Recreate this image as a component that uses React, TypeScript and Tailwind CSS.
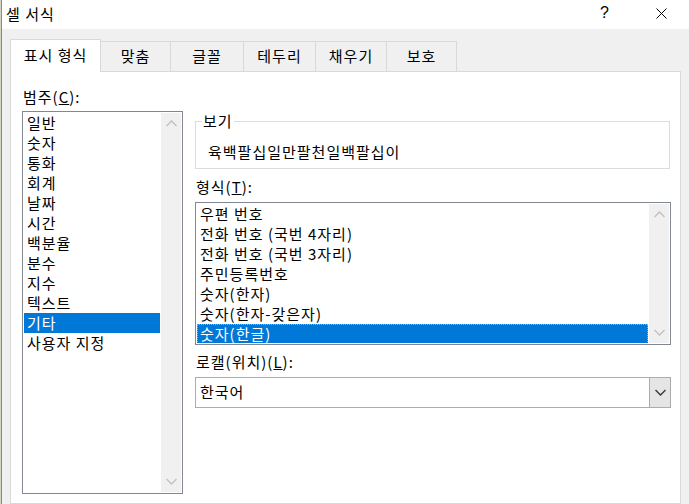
const categories = [
  "일반",
  "숫자",
  "통화",
  "회계",
  "날짜",
  "시간",
  "백분율",
  "분수",
  "지수",
  "텍스트",
  "기타",
  "사용자 지정",
]

const formats = [
  "우편 번호",
  "전화 번호 (국번 4자리)",
  "전화 번호 (국번 3자리)",
  "주민등록번호",
  "숫자(한자)",
  "숫자(한자-갖은자)",
  "숫자(한글)",
]

const tabs = [
  { label: "맞춤", w: "w-[70px]" },
  { label: "글꼴", w: "w-[73px]" },
  { label: "테두리", w: "w-[72px]" },
  { label: "채우기", w: "w-[71px]" },
  { label: "보호", w: "w-[70px]" },
]

function Chevron({ up, color = "#c2c2c2" }: { up?: boolean; color?: string }) {
  return (
    <svg width="11" height="7" viewBox="0 0 11 7">
      <polyline
        points={up ? "0.5,6 5.5,1 10.5,6" : "0.5,1 5.5,6 10.5,1"}
        fill="none"
        stroke={color}
        strokeWidth="1.5"
      />
    </svg>
  )
}

function ScrollBar() {
  return (
    <div className="flex w-[20px] flex-col justify-between bg-[#f0f0f0]">
      <div className="flex h-[21px] items-center justify-center">
        <Chevron up />
      </div>
      <div className="flex h-[21px] items-center justify-center">
        <Chevron />
      </div>
    </div>
  )
}

function ListBox({
  items,
  selected,
  focus,
  className,
}: {
  items: string[]
  selected: number
  focus?: boolean
  className: string
}) {
  return (
    <div className={`flex border border-[#828790] bg-white p-[1px] ${className}`}>
      <div className="flex-1 overflow-hidden pr-[1px]">
        {items.map((item, i) =>
          i === selected ? (
            <div
              key={item}
              className={`h-[20px] bg-[#0078d7] pl-[3px] leading-[20px] whitespace-nowrap text-white ${
                focus ? "outline-1 outline-dotted outline-[#f0a030] -outline-offset-1" : ""
              }`}
            >
              {item}
            </div>
          ) : (
            <div key={item} className="h-[20px] pl-[3px] leading-[20px] whitespace-nowrap">
              {item}
            </div>
          )
        )}
      </div>
      <ScrollBar />
    </div>
  )
}

export default function App() {
  return (
    <div className="flex h-[504px] w-[689px] overflow-hidden bg-white font-['Noto_Sans_CJK_KR','Noto_Sans',sans-serif] text-[15px] tracking-[1px] text-black">
      <div className="w-[1px] bg-[#d4d4c0]" />
      <div className="w-[1px] bg-[#8a8a8a]" />

      <div className="flex flex-1 flex-col">
        {/* title bar */}
        <div className="flex h-[29px] items-center bg-white pb-[3px] pl-[4px]">
          <span className="leading-none">셀 서식</span>
          <span className="ml-auto mr-[46px] font-['Liberation_Sans',sans-serif] text-[16px] leading-none">?</span>
          <svg width="11" height="11" viewBox="0 0 11 11" className="mr-[22px]">
            <path d="M0.5 0.5 L10.5 10.5 M10.5 0.5 L0.5 10.5" stroke="#000" strokeWidth="1" />
          </svg>
        </div>

        {/* body */}
        <div className="flex flex-1 flex-col bg-[#f0f0f0] pl-[8px] pt-[10px]">
          <div className="flex h-[32px] items-end">
            <div className="relative z-10 -mb-[1px] flex h-[33px] w-[91px] items-center justify-center border border-b-0 border-[#d9d9d9] bg-white pb-[1px]">
              표시 형식
            </div>
            {tabs.map((t) => (
              <div
                key={t.label}
                className={`flex h-[30px] ${t.w} items-center justify-center border-t border-r border-[#d9d9d9] bg-[#f0f0f0]`}
              >
                {t.label}
              </div>
            ))}
          </div>

          {/* tab page */}
          <div className="flex w-[671px] flex-1 gap-[12px] border border-[#d9d9d9] bg-white pl-[11px] pt-[15px]">
            {/* category column */}
            <div className="flex w-[161px] flex-col">
              <div className="h-[20px] pl-[1px] leading-[20px]">
                범주(<span className="underline">C</span>):
              </div>
              <ListBox items={categories} selected={10} className="mt-[4px] h-[383px]" />
            </div>

            {/* right column */}
            <div className="flex w-[476px] flex-col">
              <fieldset className="mt-[24px] mr-[1px] border border-[#dcdcdc]">
                <legend className="ml-[6px] px-[1px] leading-[20px]">보기</legend>
                <div className="pb-[6px] pl-[12px] pt-[11px] leading-[20px]">육백팔십일만팔천일백팔십이</div>
              </fieldset>

              <div className="mt-[8px] h-[20px] pl-[1px] leading-[20px]">
                형식(<span className="underline">T</span>):
              </div>
              <ListBox items={formats} selected={6} focus className="mt-[5px] h-[143px]" />

              <div className="mt-[7px] h-[20px] pl-[1px] leading-[20px]">
                로캘(위치)(<span className="underline">L</span>):
              </div>
              <div className="mt-[5px] flex h-[31px] border border-[#acacac] bg-white">
                <div className="flex flex-1 items-center pl-[4px]">한국어</div>
                <div className="flex w-[21px] items-center justify-center border-l border-[#acacac] bg-[#e5e5e5]">
                  <Chevron color="#3c3c3c" />
                </div>
              </div>
            </div>
          </div>
        </div>
      </div>
    </div>
  )
}
